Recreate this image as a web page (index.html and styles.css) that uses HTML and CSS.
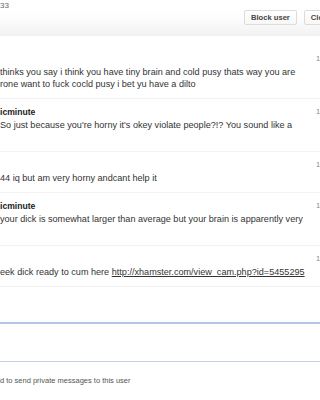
FILE: index.html
```html
<!DOCTYPE html>
<html lang="en">
<head>
    <meta charset="UTF-8">
    <meta name="viewport" content="width=device-width, initial-scale=1.0">
    <title>Messages</title>
    <link rel="stylesheet" href="styles.css">
</head>
<body>
    <div class="page">
        <div class="header">
            <span class="title">33</span>
            <div class="actions">
                <button type="button" class="btn">Block user</button>
                <button type="button" class="btn">Clear</button>
            </div>
        </div>

        <div class="thread">
            <div class="msg">
                <div class="content">
                    <div class="name">&nbsp;</div>
                    <div class="text">thinks you say i think you have tiny brain and cold pusy thats way you are</div>
                    <div class="text">rone want to fuck cocld pusy i bet yu have a dilto</div>
                </div>
                <span class="stamp">1</span>
            </div>
            <div class="msg">
                <div class="content">
                    <div class="name">icminute</div>
                    <div class="text">So just because you're horny it's okey violate people?!? You sound like a</div>
                    <div class="text">&nbsp;</div>
                </div>
                <span class="stamp">1</span>
            </div>
            <div class="msg">
                <div class="content">
                    <div class="name">&nbsp;</div>
                    <div class="text">44 iq but am very horny andcant help it</div>
                </div>
                <span class="stamp">1</span>
            </div>
            <div class="msg">
                <div class="content">
                    <div class="name">icminute</div>
                    <div class="text">your dick is somewhat larger than average but your brain is apparently very</div>
                    <div class="text">&nbsp;</div>
                </div>
                <span class="stamp">1</span>
            </div>
            <div class="msg">
                <div class="content">
                    <div class="name">&nbsp;</div>
                    <div class="text">eek dick ready to cum here <a href="#">http://xhamster.com/view_cam.php?id=5455295</a></div>
                </div>
                <span class="stamp">1</span>
            </div>
        </div>

        <div class="compose">
            <div class="reply"></div>
        </div>

        <p class="notice">d to send private messages to this user</p>
    </div>
</body>
</html>
```

FILE: styles.css
```css
/* base */
body {
    margin: 0;
    overflow: hidden;
    background: #fff;
    font-family: 'Liberation Sans', Arial, sans-serif;
    color: #333;
}

.page {
    width: 400px;
}

/* header with actions */
.header {
    display: flex;
    height: 35px;
    background: linear-gradient(#fff 0%, #fdfdfd 50%, #f2f2f2 100%);
    border-bottom: 1px solid #f0f0f0;
}

.title {
    flex: 0 0 244px;
    padding-top: 1px;
    font-size: 8px;
    line-height: 10px;
    color: #666;
}

.actions {
    display: flex;
    gap: 7px;
    padding-top: 10px;
    align-items: flex-start;
}

.btn {
    height: 15px;
    padding: 0 6px;
    font-family: inherit;
    font-size: 7.6px;
    font-weight: bold;
    color: #444;
    white-space: nowrap;
    background: linear-gradient(#fff, #f7f7f7);
    border: 1px solid #dcdcdc;
    border-radius: 2px;
}

/* message list */
.thread {
    margin-top: 10px;
}

.msg {
    display: grid;
    grid-template-columns: 316px 1fr;
    padding: 7px 0 8px;
    border-bottom: 1px solid #f3f3f3;
}

.name {
    font-size: 8.6px;
    line-height: 13px;
    font-weight: bold;
    color: #222;
}

.text {
    font-size: 9.1px;
    line-height: 12px;
    white-space: nowrap;
}

.text a {
    color: #333;
}

.stamp {
    font-size: 7.5px;
    line-height: 11px;
    color: #888;
}

/* reply box */
.compose {
    margin-top: 35px;
}

.reply {
    height: 37px;
    border-top: 2px solid #afc8e7;
    border-bottom: 1px solid #c6d2dd;
}

.notice {
    margin: 14px 0 0;
    font-size: 7.5px;
    line-height: 10px;
    color: #555;
}
```
